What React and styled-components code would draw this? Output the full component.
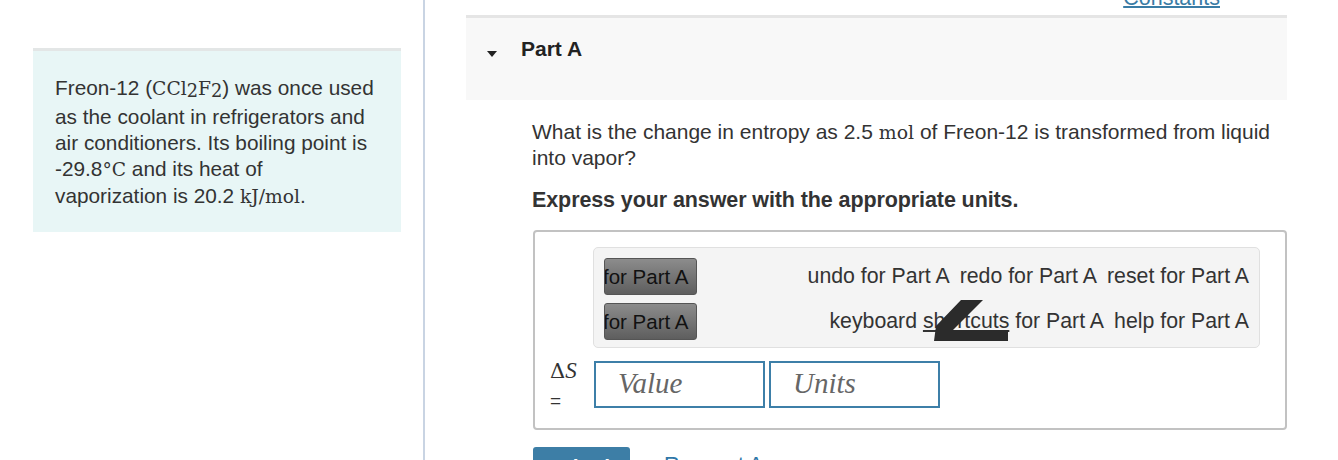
import React from "react";
import styled, {createGlobalStyle} from "styled-components";

const GlobalStyle = createGlobalStyle`
  html, body {
    margin: 0;
    padding: 0;
    background: #fff;
    overflow: hidden;
  }
  body {
    font-family: "Liberation Sans", Arial, sans-serif;
    color: #333;
  }
`;

const Page = styled.div`
  display: flex;
  width: 1338px;
  height: 460px;
  overflow: hidden;
`;

const SideColumn = styled.div`
  width: 390px;
  flex: none;
  padding: 48px 0 0 33px;
  border-right: 2px solid #c9d4e3;
  box-sizing: content-box;
`;

const IntroPanel = styled.div`
  width: 368px;
  box-sizing: border-box;
  background: #e8f6f6;
  border-top: 3px solid #e3e6e6;
  padding: 24px 22px 22px 22px;
  font-size: 20.8px;
  line-height: 26px;
  color: #333;
`;

const Math = styled.span`
  font-family: "DejaVu Serif", "Liberation Serif", serif;
  font-size: 0.9em;
`;

const Sub = styled.span`
  font-size: 0.95em;
  vertical-align: -2px;
`;

const MainColumn = styled.div`
  flex: 1;
  padding: 0 51px 0 41px;
  display: flex;
  flex-direction: column;
  & > * {
    flex-shrink: 0;
  }
`;

const TopLinks = styled.div`
  height: 15px;
  display: flex;
  justify-content: flex-end;
  padding-right: 67px;
`;

const ConstantsLink = styled.a`
  margin-top: -13px;
  font-size: 21.5px;
  line-height: 22px;
  color: #3a7ca5;
  text-decoration: underline;
  text-underline-offset: 1px;
`;

const PartHeader = styled.div`
  height: 85px;
  box-sizing: border-box;
  background: #f8f8f8;
  border-top: 3px solid #e5e5e5;
  display: flex;
  align-items: flex-start;
  padding: 19px 0 0 21px;
  gap: 24px;
`;

const Caret = styled.span`
  width: 0;
  height: 0;
  border-left: 5px solid transparent;
  border-right: 5px solid transparent;
  border-top: 6px solid #222;
  margin-top: 14px;
`;

const PartTitle = styled.h2`
  margin: 0;
  font-size: 21px;
  font-weight: bold;
  color: #222;
  line-height: 24px;
`;

const PartBody = styled.div`
  padding-left: 66px;
`;

const Question = styled.p`
  margin: 19px 0 0;
  font-size: 21px;
  line-height: 26px;
  color: #333;
`;

const Instruction = styled.p`
  margin: 16px 0 0;
  font-size: 21.5px;
  line-height: 26px;
  font-weight: bold;
  color: #333;
  letter-spacing: -0.1px;
`;

const AnswerBox = styled.div`
  position: relative;
  margin: 17px 0 0 67px;
  height: 200px;
  box-sizing: border-box;
  border: 2px solid #c2c2c2;
  border-radius: 4px;
  display: grid;
  grid-template-columns: 58px auto;
  grid-template-rows: auto auto;
  align-content: start;
  padding-top: 15px;
`;

const Toolbar = styled.div`
  grid-column: 2;
  width: 667px;
  height: 101px;
  box-sizing: border-box;
  background: #f4f4f4;
  border: 1px solid #e0e0e0;
  border-radius: 5px;
  padding: 10px 10px 0 10px;
  display: flex;
  flex-direction: column;
  gap: 8px;
`;

const ToolRow = styled.div`
  display: flex;
  align-items: center;
  height: 37px;
`;

const DarkButton = styled.button`
  width: 93px;
  height: 37px;
  flex: none;
  padding: 0;
  border: 1px solid #555;
  border-radius: 3px;
  background: linear-gradient(#8c8c8c, #5e5e5e);
  font-family: "Liberation Sans", Arial, sans-serif;
  font-size: 20.5px;
  color: #111;
  white-space: nowrap;
  overflow: hidden;
  text-align: left;
  text-indent: -2px;
`;

const ToolLinks = styled.div`
  margin-left: auto;
  display: flex;
  gap: 10px;
  font-size: 21.3px;
  color: #333;
  white-space: nowrap;
`;

const ToolLink = styled.span`
  text-decoration: ${p => (p.$underline ? "underline" : "none")};
`;

const Label = styled.div`
  grid-column: 1;
  padding: 8px 0 0 15px;
  font-family: "DejaVu Serif", "Liberation Serif", serif;
  font-size: 21px;
  line-height: 29px;
  color: #333;
`;

const Italic = styled.i`
  font-family: "Liberation Serif", serif;
  font-size: 23px;
`;

const Equals = styled.span`
  font-family: "Liberation Sans", Arial, sans-serif;
  font-size: 19px;
`;

const Inputs = styled.div`
  grid-column: 2;
  display: flex;
  gap: 4px;
  padding: 13px 0 0 1px;
`;

const Field = styled.input`
  width: 171px;
  height: 47px;
  box-sizing: border-box;
  border: 2px solid #3d7fa8;
  padding: 0 0 2px 22px;
  font-family: "Liberation Serif", serif;
  font-style: italic;
  font-size: 29px;
  color: #555;
  outline: none;
  &::placeholder {
    color: #666;
  }
`;

const Pointer = styled.svg`
  position: absolute;
  left: 399px;
  top: 68px;
`;

const Actions = styled.div`
  display: flex;
  align-items: flex-start;
  gap: 34px;
  margin: 17px 0 0 67px;
`;

const SubmitButton = styled.button`
  width: 97px;
  height: 40px;
  border: none;
  border-radius: 3px;
  background: #3d7ea6;
  color: #fff;
  font-family: "Liberation Sans", Arial, sans-serif;
  font-size: 21px;
  font-weight: bold;
`;

const RequestLink = styled.a`
  margin-top: 6px;
  font-size: 21.5px;
  color: #2f77a8;
`;

export default function App() {
    return (
        <Page>
            <GlobalStyle/>
            <SideColumn>
                <IntroPanel>
                    Freon-12 (<Math>CCl<Sub>2</Sub>F<Sub>2</Sub></Math>) was once used as the coolant in
                    refrigerators and air conditioners. Its boiling point is -29.8<Math>°C</Math> and its
                    heat of vaporization is 20.2 <Math>kJ/mol</Math>.
                </IntroPanel>
            </SideColumn>
            <MainColumn>
                <TopLinks>
                    <ConstantsLink href="#">Constants</ConstantsLink>
                </TopLinks>
                <PartHeader>
                    <Caret/>
                    <PartTitle>Part A</PartTitle>
                </PartHeader>
                <PartBody>
                    <Question>
                        What is the change in entropy as 2.5 <Math>mol</Math> of Freon-12 is transformed from liquid
                        into vapor?
                    </Question>
                    <Instruction>Express your answer with the appropriate units.</Instruction>
                </PartBody>
                <AnswerBox>
                    <Toolbar>
                        <ToolRow>
                            <DarkButton>for Part A</DarkButton>
                            <ToolLinks>
                                <ToolLink>undo for Part A</ToolLink>
                                <ToolLink>redo for Part A</ToolLink>
                                <ToolLink>reset for Part A</ToolLink>
                            </ToolLinks>
                        </ToolRow>
                        <ToolRow>
                            <DarkButton>for Part A</DarkButton>
                            <ToolLinks>
                                <ToolLink>keyboard <ToolLink $underline>shortcuts</ToolLink> for Part A</ToolLink>
                                <ToolLink>help for Part A</ToolLink>
                            </ToolLinks>
                        </ToolRow>
                    </Toolbar>
                    <Label>
                        Δ<Italic>S</Italic>
                        <br/><Equals>=</Equals>
                    </Label>
                    <Inputs>
                        <Field placeholder="Value"/>
                        <Field placeholder="Units"/>
                    </Inputs>
                    <Pointer width="76" height="42" viewBox="0 0 76 42">
                        <polygon points="27,0 49,0 19,30 74,30 74,41 0,41 2,26" fill="#2b2b2b"/>
                    </Pointer>
                </AnswerBox>
                <Actions>
                    <SubmitButton>Submit</SubmitButton>
                    <RequestLink href="#">Request Answer</RequestLink>
                </Actions>
            </MainColumn>
        </Page>
    );
}
